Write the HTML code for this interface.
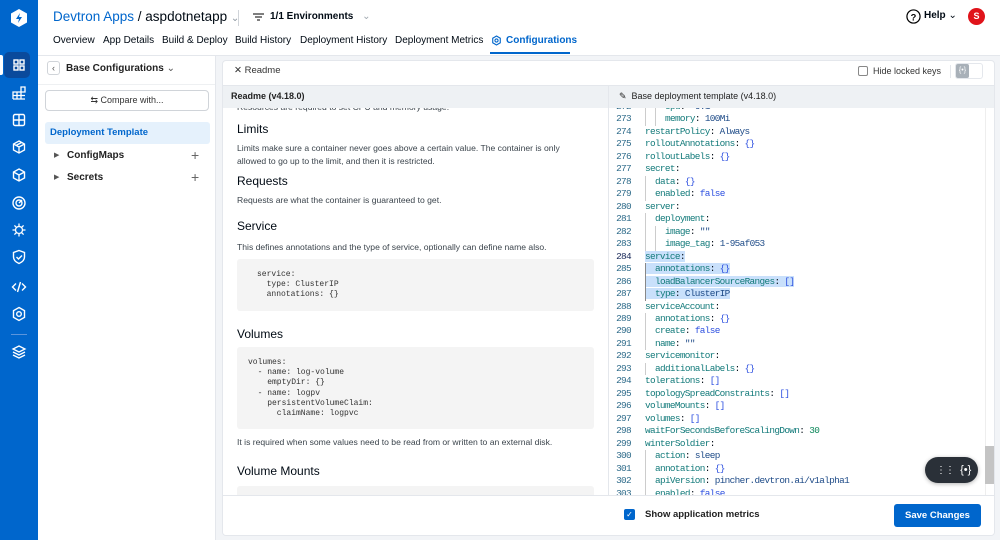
<!DOCTYPE html>
<html><head><meta charset="utf-8"><style>
*{box-sizing:border-box;margin:0;padding:0}
body{width:1000px;height:540px;overflow:hidden;background:#f2f4f7;font-family:"Liberation Sans",sans-serif;color:#000a14;position:relative}
.a{position:absolute}
.side{left:0;top:0;width:38px;height:540px;background:#0066cc}
.ic{position:absolute;left:11px;width:16px;height:16px}
.hdr{left:38px;top:0;width:962px;height:56px;background:#fff;border-bottom:1px solid #e4e7ec}
.tab{position:absolute;top:35px;font-size:10px;color:#000a14;white-space:nowrap}
.lp{left:38px;top:56px;width:178px;height:484px;background:#fff;border-right:1px solid #e4e7ec}
.card{left:222px;top:60px;width:773px;height:476px;background:#fff;border:1px solid #e4e7ec;border-radius:4px;overflow:hidden}
.rd{font-size:8.6px;color:#3b444c;white-space:nowrap}
.h{font-size:12px;color:#000a14}
.cb{background:#f4f4f4;border-radius:3px;font-family:"Liberation Mono",monospace;font-size:8px;color:#333;white-space:pre;line-height:10.2px}
.code{left:386px;top:47px;width:374px;height:387px;overflow:hidden;font-family:"Liberation Mono",monospace;font-size:9.4px;letter-spacing:-0.65px}
.ln{height:12.47px;line-height:12.47px;white-space:pre;position:relative}
.n{display:inline-block;width:22px;text-align:right;color:#2e6b8a;margin-right:14px}
.i{display:inline-block;width:10px;height:12.47px;vertical-align:top;border-left:1px solid #ccc}
.k{color:#127a7a}.v{color:#1d4a87}.b{color:#2c4fe0}.g{color:#098658}
.hl{background:#c9e0fb}
</style></head><body>
<div class="a side">
 <svg class="a" style="left:9px;top:8px" width="20" height="20" viewBox="0 0 20 20"><path d="M10 1 L18 5.5 V14.5 L10 19 L2 14.5 V5.5Z" fill="#fff"/><path d="M11 5 L7 11 H10 L9 15 L13 9 H10Z" fill="#0066cc"/></svg>
 <div class="a" style="left:4px;top:52px;width:26px;height:26px;background:#0a4a9c;border-radius:5px"></div>
 <div class="a" style="left:0;top:55px;width:3px;height:20px;background:#fff;border-radius:0 2px 2px 0"></div>
 <svg class="ic" style="top:57px" viewBox="0 0 16 16" fill="none" stroke="#fff" stroke-width="1.4"><rect x="3" y="3" width="4" height="4"/><rect x="9" y="3" width="4" height="4"/><rect x="3" y="9" width="4" height="4"/><rect x="9" y="9" width="4" height="4"/></svg>
 <svg class="ic" style="top:85px" viewBox="0 0 16 16" fill="none" stroke="#fff" stroke-width="1.3"><path d="M2 14V7h12V2h-4v12M2 10.5h12M6 7v7M10 7v7M2 14h12"/></svg>
 <svg class="ic" style="top:112px" viewBox="0 0 16 16" fill="none" stroke="#fff" stroke-width="1.4"><rect x="2.5" y="2.5" width="11" height="11" rx="1.5"/><path d="M8 2.5v11M2.5 8h11"/></svg>
 <svg class="ic" style="top:139px" viewBox="0 0 16 16" fill="none" stroke="#fff" stroke-width="1.3"><path d="M8 2l5.5 3v6L8 14l-5.5-3V5z M2.5 5L8 8l5.5-3M8 8v6M5 6.5l5.5-3"/></svg>
 <svg class="ic" style="top:167px" viewBox="0 0 16 16" fill="none" stroke="#fff" stroke-width="1.4"><path d="M8 2l5.5 3v6L8 14l-5.5-3V5z M2.5 5L8 8l5.5-3M8 8v6"/></svg>
 <svg class="ic" style="top:195px" viewBox="0 0 16 16" fill="none" stroke="#fff" stroke-width="1.4"><circle cx="8" cy="8" r="6"/><circle cx="8" cy="8" r="3"/><path d="M8 8l3-3"/></svg>
 <svg class="ic" style="top:222px" viewBox="0 0 16 16" fill="none" stroke="#fff" stroke-width="1.3"><circle cx="8" cy="8" r="3.5"/><path d="M8 1.5v3M8 11.5v3M1.5 8h3M11.5 8h3M3.4 3.4l2.1 2.1M10.5 10.5l2.1 2.1M3.4 12.6l2.1-2.1M10.5 5.5l2.1-2.1"/></svg>
 <svg class="ic" style="top:249px" viewBox="0 0 16 16" fill="none" stroke="#fff" stroke-width="1.4"><path d="M8 1.5l5.5 2v4.5c0 3-2.5 5.2-5.5 6.5-3-1.3-5.5-3.5-5.5-6.5V3.5z M5.5 8l2 2 3.5-3.5"/></svg>
 <svg class="ic" style="top:279px" viewBox="0 0 16 16" fill="none" stroke="#fff" stroke-width="1.4"><path d="M5 4.5L1.5 8 5 11.5M11 4.5l3.5 3.5-3.5 3.5M9.5 3l-3 10"/></svg>
 <svg class="ic" style="top:306px" viewBox="0 0 16 16" fill="none" stroke="#fff" stroke-width="1.4"><path d="M8 1.5l5.5 3.2v6.6L8 14.5l-5.5-3.2V4.7z"/><circle cx="8" cy="8" r="2.3"/></svg>
 <div class="a" style="left:11px;top:334px;width:16px;height:1px;background:#5b95dc"></div>
 <svg class="ic" style="top:344px" viewBox="0 0 16 16" fill="none" stroke="#fff" stroke-width="1.3"><path d="M8 2l6 3-6 3-6-3z M2 8l6 3 6-3M2 11l6 3 6-3"/></svg>
</div>

<div class="a hdr">
 <div class="a" style="left:15px;top:9px;font-size:13.5px;white-space:nowrap"><span style="color:#0066cc">Devtron Apps</span> / aspdotnetapp <span style="color:#8c96a0;font-size:10px">&#8964;</span></div>
 <div class="a" style="left:200px;top:10px;width:1px;height:16px;background:#d0d4d9"></div>
 <svg class="a" style="left:215px;top:12px" width="11" height="10" viewBox="0 0 11 10" stroke="#333" stroke-width="1.2"><path d="M0 2h11M2 5h7M4 8h3"/></svg>
 <div class="a" style="left:232px;top:11px;font-size:10px;font-weight:bold;white-space:nowrap">1/1 Environments <span style="color:#a0a8b0;font-weight:normal;margin-left:6px">&#8964;</span></div>
 <div class="tab" style="left:15px">Overview</div>
 <div class="tab" style="left:65px">App Details</div>
 <div class="tab" style="left:124px">Build &amp; Deploy</div>
 <div class="tab" style="left:197px">Build History</div>
 <div class="tab" style="left:262px">Deployment History</div>
 <div class="tab" style="left:357px">Deployment Metrics</div>
 <svg class="a" style="left:453px;top:35px" width="11" height="11" viewBox="0 0 16 16" fill="none" stroke="#0066cc" stroke-width="1.6"><path d="M8 1.5l5.5 3.2v6.6L8 14.5l-5.5-3.2V4.7z"/><circle cx="8" cy="8" r="2.3"/></svg>
 <div class="tab" style="left:468px;color:#0066cc;font-weight:bold">Configurations</div>
 <div class="a" style="left:452px;top:52px;width:80px;height:2px;background:#0066cc"></div>
 <svg class="a" style="left:868px;top:9px" width="15" height="15" viewBox="0 0 16 16"><circle cx="8" cy="8" r="7" fill="none" stroke="#000" stroke-width="1.3"/><text x="8" y="12" font-size="10" text-anchor="middle" font-family="Liberation Sans" font-weight="bold">?</text></svg>
 <div class="a" style="left:886px;top:10px;font-size:10px;font-weight:bold">Help <span style="font-weight:normal">&#8964;</span></div>
 <div class="a" style="left:930px;top:8px;width:17px;height:17px;border-radius:50%;background:#e0131a;color:#fff;font-size:9px;font-weight:bold;text-align:center;line-height:17px">S</div>
</div>

<div class="a lp">
 <div class="a" style="left:9px;top:5px;width:13px;height:14px;border:1px solid #d0d4d9;border-radius:3px;font-size:9px;text-align:center;line-height:12px;color:#555">&#8249;</div>
 <div class="a" style="left:28px;top:7px;font-size:10px;font-weight:bold;color:#222">Base Configurations <span style="font-weight:normal;color:#555">&#8964;</span></div>
 <div class="a" style="left:0;top:28px;width:177px;height:1px;background:#eef0f2"></div>
 <div class="a" style="left:7px;top:34px;width:164px;height:21px;border:1px solid #d0d4d9;border-radius:4px;font-size:9px;color:#333;text-align:center;line-height:19px">&#8646; Compare with...</div>
 <div class="a" style="left:7px;top:66px;width:165px;height:22px;background:#e5f1fc;border-radius:3px;font-size:9.5px;color:#0066cc;font-weight:bold;line-height:22px;padding-left:5px">Deployment Template</div>
 <div class="a" style="left:16px;top:95px;font-size:7px;color:#555">&#9654;</div>
 <div class="a" style="left:29px;top:94px;font-size:10px;font-weight:bold;color:#222">ConfigMaps</div>
 <div class="a" style="left:153px;top:91px;font-size:14px;color:#666">+</div>
 <div class="a" style="left:16px;top:117px;font-size:7px;color:#555">&#9654;</div>
 <div class="a" style="left:29px;top:116px;font-size:10px;font-weight:bold;color:#222">Secrets</div>
 <div class="a" style="left:153px;top:113px;font-size:14px;color:#666">+</div>
</div>

<div class="a card">
 <div class="a" style="left:11px;top:4px;font-size:9.5px;color:#333">&#10005; Readme</div>
 <div class="a" style="left:635px;top:5px;width:10px;height:10px;border:1px solid #888;border-radius:2px"></div>
 <div class="a" style="left:650px;top:5px;font-size:9px;color:#333">Hide locked keys</div>
 <div class="a" style="left:727px;top:4px;width:1px;height:13px;background:#e4e7ec"></div>
 <div class="a" style="left:732px;top:2px;width:28px;height:16px;border:1px solid #e4e7ec;border-radius:3px"><div style="width:13px;height:14px;background:#a8b0b8;border-radius:2px;color:#fff;font-size:7px;text-align:center;line-height:14px">{&#8226;}</div></div>
 <div class="a" style="left:0;top:24px;width:773px;height:23px;background:#eef1f4;border-top:1px solid #e4e7ec"></div>
 <div class="a" style="left:8px;top:30px;font-size:9px;font-weight:bold;color:#222">Readme (v4.18.0)</div>
 <div class="a" style="left:385px;top:24px;width:1px;height:410px;background:#e4e7ec"></div>
 <div class="a" style="left:396px;top:30px;font-size:9px;color:#222">&#9998; &nbsp;Base deployment template (v4.18.0)</div>

 <div class="a" style="left:0;top:47px;width:385px;height:387px;overflow:hidden">
  <div class="a rd" style="left:14px;top:-6px">Resources are required to set CPU and memory usage.</div>
  <div class="a h" style="left:14px;top:14px">Limits</div>
  <div class="a rd" style="left:14px;top:35px">Limits make sure a container never goes above a certain value. The container is only</div>
  <div class="a rd" style="left:14px;top:48px">allowed to go up to the limit, and then it is restricted.</div>
  <div class="a h" style="left:14px;top:66px">Requests</div>
  <div class="a rd" style="left:14px;top:87px">Requests are what the container is guaranteed to get.</div>
  <div class="a h" style="left:14px;top:111px">Service</div>
  <div class="a rd" style="left:14px;top:134px">This defines annotations and the type of service, optionally can define name also.</div>
  <div class="a cb" style="left:14px;top:151px;width:357px;height:52px;padding:11px 0 0 20px">service:
  type: ClusterIP
  annotations: {}</div>
  <div class="a h" style="left:14px;top:219px">Volumes</div>
  <div class="a cb" style="left:14px;top:239px;width:357px;height:82px;padding:11px 0 0 11px">volumes:
  - name: log-volume
    emptyDir: {}
  - name: logpv
    persistentVolumeClaim:
      claimName: logpvc</div>
  <div class="a rd" style="left:14px;top:329px">It is required when some values need to be read from or written to an external disk.</div>
  <div class="a h" style="left:14px;top:356px">Volume Mounts</div>
  <div class="a cb" style="left:14px;top:378px;width:357px;height:40px"></div>
 </div>

 <div class="a code"><div style="margin-top:-7px">
<div class="ln"><span class="n">272</span><span class="i"></span><span class="i"></span><span class="k">cpu</span>: <span class="v">"0.1"</span></div>
<div class="ln"><span class="n">273</span><span class="i"></span><span class="i"></span><span class="k">memory</span>: <span class="v">100Mi</span></div>
<div class="ln"><span class="n">274</span><span class="k">restartPolicy</span>: <span class="v">Always</span></div>
<div class="ln"><span class="n">275</span><span class="k">rolloutAnnotations</span>: <span class="b">{}</span></div>
<div class="ln"><span class="n">276</span><span class="k">rolloutLabels</span>: <span class="b">{}</span></div>
<div class="ln"><span class="n">277</span><span class="k">secret</span>:</div>
<div class="ln"><span class="n">278</span><span class="i"></span><span class="k">data</span>: <span class="b">{}</span></div>
<div class="ln"><span class="n">279</span><span class="i"></span><span class="k">enabled</span>: <span class="b">false</span></div>
<div class="ln"><span class="n">280</span><span class="k">server</span>:</div>
<div class="ln"><span class="n">281</span><span class="i"></span><span class="k">deployment</span>:</div>
<div class="ln"><span class="n">282</span><span class="i"></span><span class="i"></span><span class="k">image</span>: <span class="v">""</span></div>
<div class="ln"><span class="n">283</span><span class="i"></span><span class="i"></span><span class="k">image_tag</span>: <span class="v">1-95af053</span></div>
<div class="ln"><span class="n" style="color:#1a2a5a">284</span><span class="hl"><span class="k">service</span>:</span></div>
<div class="ln"><span class="n">285</span><span class="hl"><span class="i" style="border-color:#888"></span><span class="k">annotations</span>: <span class="b">{}</span></span></div>
<div class="ln"><span class="n">286</span><span class="hl"><span class="i" style="border-color:#888"></span><span class="k">loadBalancerSourceRanges</span>: <span class="b">[]</span></span></div>
<div class="ln"><span class="n">287</span><span class="hl"><span class="i" style="border-color:#888"></span><span class="k">type</span>: <span class="v">ClusterIP</span></span></div>
<div class="ln"><span class="n">288</span><span class="k">serviceAccount</span>:</div>
<div class="ln"><span class="n">289</span><span class="i"></span><span class="k">annotations</span>: <span class="b">{}</span></div>
<div class="ln"><span class="n">290</span><span class="i"></span><span class="k">create</span>: <span class="b">false</span></div>
<div class="ln"><span class="n">291</span><span class="i"></span><span class="k">name</span>: <span class="v">""</span></div>
<div class="ln"><span class="n">292</span><span class="k">servicemonitor</span>:</div>
<div class="ln"><span class="n">293</span><span class="i"></span><span class="k">additionalLabels</span>: <span class="b">{}</span></div>
<div class="ln"><span class="n">294</span><span class="k">tolerations</span>: <span class="b">[]</span></div>
<div class="ln"><span class="n">295</span><span class="k">topologySpreadConstraints</span>: <span class="b">[]</span></div>
<div class="ln"><span class="n">296</span><span class="k">volumeMounts</span>: <span class="b">[]</span></div>
<div class="ln"><span class="n">297</span><span class="k">volumes</span>: <span class="b">[]</span></div>
<div class="ln"><span class="n">298</span><span class="k">waitForSecondsBeforeScalingDown</span>: <span class="g">30</span></div>
<div class="ln"><span class="n">299</span><span class="k">winterSoldier</span>:</div>
<div class="ln"><span class="n">300</span><span class="i"></span><span class="k">action</span>: <span class="v">sleep</span></div>
<div class="ln"><span class="n">301</span><span class="i"></span><span class="k">annotation</span>: <span class="b">{}</span></div>
<div class="ln"><span class="n">302</span><span class="i"></span><span class="k">apiVersion</span>: <span class="v">pincher.devtron.ai/v1alpha1</span></div>
<div class="ln"><span class="n">303</span><span class="i"></span><span class="k">enabled</span>: <span class="b">false</span></div>
 </div></div>
 <div class="a" style="left:762px;top:47px;width:11px;height:387px;border-left:1px solid #eee"></div>
 <div class="a" style="left:762px;top:385px;width:11px;height:38px;background:#c4c4c4"></div>
 <div class="a" style="left:702px;top:396px;width:53px;height:26px;border-radius:13px;background:#2a3038;box-shadow:0 1px 4px rgba(0,0,0,.3);color:#fff;font-size:11px;line-height:26px;padding-left:11px;white-space:nowrap"><span style="font-size:10px;letter-spacing:-1px">&#8942;&#8942;</span>&nbsp;&nbsp;{&#8226;}</div>

 <div class="a" style="left:0;top:434px;width:773px;height:42px;border-top:1px solid #e4e7ec;background:#fff"></div>
 <div class="a" style="left:401px;top:448px;width:11px;height:11px;background:#0066cc;border-radius:2px;color:#fff;font-size:8px;text-align:center;line-height:11px">&#10003;</div>
 <div class="a" style="left:422px;top:448px;font-size:9.5px;font-weight:bold;color:#222">Show application metrics</div>
 <div class="a" style="left:671px;top:443px;width:87px;height:23px;background:#0066cc;border-radius:3px;color:#fff;font-size:9.5px;font-weight:bold;text-align:center;line-height:23px">Save Changes</div>
</div>
</body></html>
